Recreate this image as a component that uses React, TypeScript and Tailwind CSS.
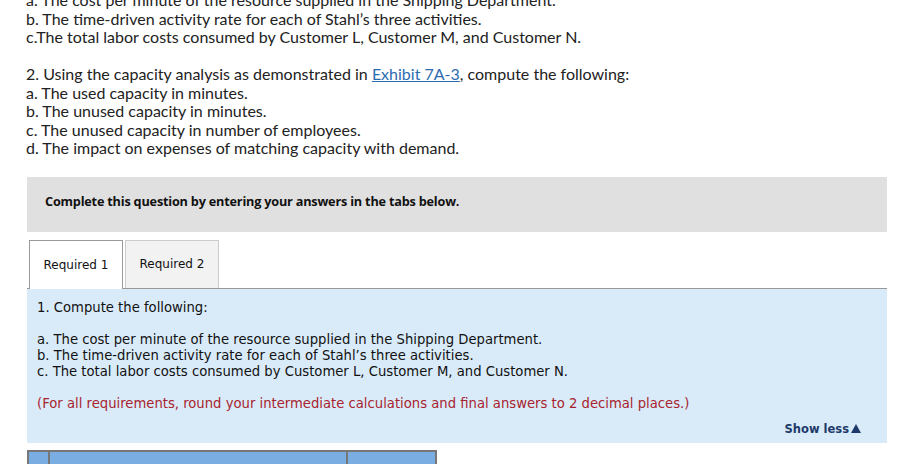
export default function App() {
  return (
    <div className="h-[464px] w-[915px] overflow-hidden bg-white">
      <div className="mt-[-9px] pl-[26px] font-['Lato',sans-serif] text-[16px] leading-[18.5px] text-[#222]">
        <p>a. The cost per minute of the resource supplied in the Shipping Department.</p>
        <p>b. The time-driven activity rate for each of Stahl’s three activities.</p>
        <p>c.The total labor costs consumed by Customer L, Customer M, and Customer N.</p>
        <p className="mt-[18.5px]">
          2. Using the capacity analysis as demonstrated in{" "}
          <a className="text-[#2b6cb0] underline" href="#">
            Exhibit 7A-3
          </a>
          , compute the following:
        </p>
        <p>a. The used capacity in minutes.</p>
        <p>b. The unused capacity in minutes.</p>
        <p>c. The unused capacity in number of employees.</p>
        <p>d. The impact on expenses of matching capacity with demand.</p>
      </div>

      <div className="ml-[27px] mt-[19px] w-[860px]">
        <div className="flex h-[55px] items-center bg-[#e0e0e0] pb-[5px] pl-[18px] font-['Open_Sans',sans-serif] text-[12.7px] font-bold tracking-[-0.2px] text-[#111]">
          Complete this question by entering your answers in the tabs below.
        </div>

        <div className="mt-[8px] flex items-end gap-[2px] border-b border-[#999] pl-[2px]">
          <div className="-mb-px flex h-[49px] w-[94px] items-center justify-center border border-b-0 border-[#999] bg-white font-['DejaVu_Sans',sans-serif] text-[12px] text-[#111]">
            Required 1
          </div>
          <div className="flex h-[48px] w-[94px] items-center justify-center border border-b-0 border-[#ccc] bg-[#f2f2f2] font-['DejaVu_Sans',sans-serif] text-[12px] text-[#111]">
            Required 2
          </div>
        </div>

        <div className="flex h-[154px] flex-col bg-[#d9ebf9] px-[10px] pt-[11px] font-['DejaVu_Sans',sans-serif] text-[13.2px] leading-[16px] text-[#111]">
          <p>1. Compute the following:</p>
          <p className="mt-[16px]">a. The cost per minute of the resource supplied in the Shipping Department.</p>
          <p>b. The time-driven activity rate for each of Stahl’s three activities.</p>
          <p>c. The total labor costs consumed by Customer L, Customer M, and Customer N.</p>
          <p className="mt-[16px] text-[#a8232f]">
            (For all requirements, round your intermediate calculations and final answers to 2 decimal places.)
          </p>
          <div className="mt-[9px] flex justify-end pr-[16px]">
            <span className="flex items-center gap-[2px] text-[11.5px] font-bold text-[#1e3a6a]">
              Show less
              <svg width="10" height="9" viewBox="0 0 10 9" aria-hidden>
                <path d="M5 0 L10 9 L0 9 Z" fill="#1e3a6a" />
              </svg>
            </span>
          </div>
        </div>

        <div className="mt-[7px] flex h-[20px] w-[410px] border-2 border-b-0 border-[#777] bg-[#7aaee3]">
          <div className="w-[21px] border-r-2 border-[#777]" />
          <div className="w-[298px] border-r-2 border-[#777]" />
          <div className="flex-1" />
        </div>
      </div>
    </div>
  );
}
